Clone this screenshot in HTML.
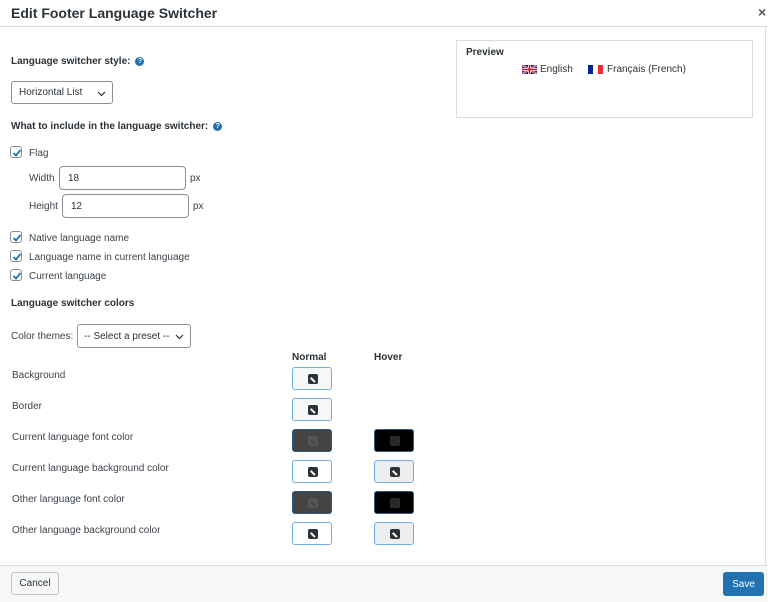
<!DOCTYPE html>
<html><head><meta charset="utf-8"><style>
*{box-sizing:border-box;margin:0;padding:0}
body{width:768px;height:602px;background:#fff;font-family:"Liberation Sans",Arial,sans-serif;color:#3c434a;position:relative;overflow:hidden;font-size:10px}
.a{position:absolute;white-space:nowrap}
.t{margin-top:1px}
.b{font-weight:bold;color:#2c3338}
.q{display:inline-block;width:9px;height:9px;border-radius:50%;background:#2271b1;color:#fff;font-size:7px;line-height:9px;text-align:center;font-weight:bold;vertical-align:1px;margin-left:5px}
.sel{position:absolute;border:1px solid #8c8f94;border-radius:3px;background:#fff;font-size:10px;color:#2c3338;padding-left:7px}
.sel svg{position:absolute;right:6px;top:9px}
.inp{position:absolute;border:1px solid #8c8f94;border-radius:4px;background:#fff;padding-left:8px;font-size:10px;color:#2c3338}
.cb{position:absolute;width:12px;height:12px;border:1px solid #8c8f94;border-radius:3px;background:#fff}
.cb svg{position:absolute;left:1px;top:1px}
.cbtn{position:absolute;width:40px;height:23px;border:1px solid #72aee6;border-radius:3px}
.cbtn i{position:absolute;left:15px;top:6px;width:10px;height:10px;border-radius:2px;background:#2c3338}
.cbtn i:after{content:"";position:absolute;left:2px;top:4.5px;width:6px;height:1.5px;background:#fff;transform:rotate(45deg)}
.dk i{background:#555}.dk i:after{background:#444}
.bk i{background:#2a2a2a}.bk i:after{background:#222}
</style></head><body>
<div class="a" style="left:0;top:0;width:768px;height:27px;border-bottom:1px solid #dcdcde;background:#fff"></div>
<div class="a b" style="left:11px;top:5px;font-size:14px;color:#2c3338">Edit Footer Language Switcher</div>
<div class="a b" style="left:758px;top:4px;font-size:14px;color:#50575e">×</div>
<div class="a" style="left:765px;top:27px;width:1px;height:538px;background:#dcdcde"></div>

<div class="a b" style="left:11px;top:56px">Language switcher style:<span class="q">?</span></div>
<div class="sel" style="left:11px;top:81px;width:102px;height:23px;line-height:22px">Horizontal List<svg width="9" height="6"><path d="M1 1l3.5 3.5L8 1" stroke="#2c3338" fill="none" stroke-width="1.2"/></svg></div>
<div class="a b" style="left:11px;top:121px">What to include in the language switcher:<span class="q">?</span></div>

<div class="cb" style="left:10px;top:146px"><svg width="10" height="10"><path d="M1.5 5l2.5 2.5L8.5 2" stroke="#2271b1" stroke-width="1.8" fill="none"/></svg></div>
<div class="a" style="left:29px;top:148px">Flag</div>
<div class="a" style="left:29px;top:173px">Width</div>
<div class="inp" style="left:59px;top:166px;width:127px;height:24px;line-height:23px">18</div>
<div class="a" style="left:190px;top:173px">px</div>
<div class="a" style="left:29px;top:201px">Height</div>
<div class="inp" style="left:62px;top:194px;width:127px;height:24px;line-height:23px">12</div>
<div class="a" style="left:193px;top:201px">px</div>

<div class="cb" style="left:10px;top:231px"><svg width="10" height="10"><path d="M1.5 5l2.5 2.5L8.5 2" stroke="#2271b1" stroke-width="1.8" fill="none"/></svg></div>
<div class="a" style="left:29px;top:233px">Native language name</div>
<div class="cb" style="left:10px;top:250px"><svg width="10" height="10"><path d="M1.5 5l2.5 2.5L8.5 2" stroke="#2271b1" stroke-width="1.8" fill="none"/></svg></div>
<div class="a" style="left:29px;top:252px">Language name in current language</div>
<div class="cb" style="left:10px;top:269px"><svg width="10" height="10"><path d="M1.5 5l2.5 2.5L8.5 2" stroke="#2271b1" stroke-width="1.8" fill="none"/></svg></div>
<div class="a" style="left:29px;top:271px">Current language</div>

<div class="a b" style="left:11px;top:298px">Language switcher colors</div>
<div class="a" style="left:11px;top:331px">Color themes:</div>
<div class="sel" style="left:77px;top:324px;width:114px;height:24px;line-height:23px;padding-left:6px">-- Select a preset --<svg width="9" height="6"><path d="M1 1l3.5 3.5L8 1" stroke="#2c3338" fill="none" stroke-width="1.2"/></svg></div>

<div class="a b" style="left:292px;top:352px">Normal</div>
<div class="a b" style="left:374px;top:352px">Hover</div>

<div class="a" style="left:12px;top:370px">Background</div>
<div class="a" style="left:12px;top:401px">Border</div>
<div class="a" style="left:12px;top:432px">Current language font color</div>
<div class="a" style="left:12px;top:463px">Current language background color</div>
<div class="a" style="left:12px;top:494px">Other language font color</div>
<div class="a" style="left:12px;top:525px">Other language background color</div>

<div class="cbtn" style="left:292px;top:367px;background:#f6f7f7"><i></i></div>
<div class="cbtn" style="left:292px;top:398px;background:#f6f7f7"><i></i></div>
<div class="cbtn dk" style="left:292px;top:429px;background:#444;border-color:#2a5a88"><i></i></div>
<div class="cbtn bk" style="left:374px;top:429px;background:#000;border-color:#2a5a88"><i></i></div>
<div class="cbtn" style="left:292px;top:460px;background:#fff"><i></i></div>
<div class="cbtn" style="left:374px;top:460px;background:#eee"><i></i></div>
<div class="cbtn dk" style="left:292px;top:491px;background:#444;border-color:#2a5a88"><i></i></div>
<div class="cbtn bk" style="left:374px;top:491px;background:#000;border-color:#2a5a88"><i></i></div>
<div class="cbtn" style="left:292px;top:522px;background:#fff"><i></i></div>
<div class="cbtn" style="left:374px;top:522px;background:#eee"><i></i></div>

<div class="a" style="left:456px;top:40px;width:297px;height:78px;border:1px solid #dcdcde"></div>
<div class="a b" style="left:466px;top:47px">Preview</div>
<svg class="a" style="left:522px;top:65px" width="15" height="9"><rect width="15" height="9" fill="#012169"/><path d="M0 0L15 9M15 0L0 9" stroke="#fff" stroke-width="2"/><path d="M0 0L15 9M15 0L0 9" stroke="#c8102e" stroke-width="0.8"/><path d="M7.5 0V9M0 4.5H15" stroke="#fff" stroke-width="3"/><path d="M7.5 0V9M0 4.5H15" stroke="#c8102e" stroke-width="1.6"/></svg>
<div class="a" style="left:540px;top:64px;color:#2c3338">English</div>
<svg class="a" style="left:588px;top:65px" width="15" height="9"><rect width="5" height="9" fill="#002395"/><rect x="5" width="5" height="9" fill="#fff"/><rect x="10" width="5" height="9" fill="#ed2939"/></svg>
<div class="a" style="left:607px;top:64px;color:#2c3338">Français (French)</div>

<div class="a" style="left:0;top:565px;width:768px;height:37px;background:#f6f7f7;border-top:1px solid #dcdcde"></div>
<div class="a" style="left:11px;top:572px;width:48px;height:23px;border:1px solid #c3c4c7;border-radius:3px;background:#f6f7f7;text-align:center;line-height:22px;color:#2c3338">Cancel</div>
<div class="a" style="left:723px;top:572px;width:41px;height:24px;border:1px solid #2271b1;border-radius:3px;background:#2271b1;text-align:center;line-height:23px;color:#fff">Save</div>
</body></html>
